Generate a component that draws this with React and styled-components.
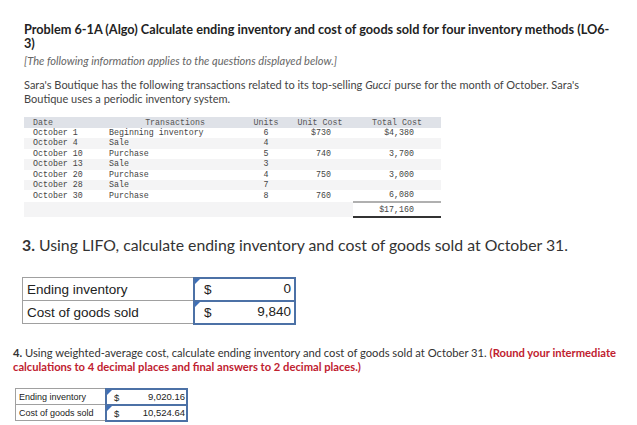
import React from 'react';
import styled, {createGlobalStyle} from 'styled-components';

const GlobalStyle = createGlobalStyle`
  body {
    margin: 0;
    background: #fff;
    font-family: Lato, "Liberation Sans", sans-serif;
    color: #333;
  }
`

const rows = [
  {date: 'October 1', what: 'Beginning inventory', units: '6', cost: '$730', total: '$4,380'},
  {date: 'October 4', what: 'Sale', units: '4', cost: '', total: ''},
  {date: 'October 10', what: 'Purchase', units: '5', cost: '740', total: '3,700'},
  {date: 'October 13', what: 'Sale', units: '3', cost: '', total: ''},
  {date: 'October 20', what: 'Purchase', units: '4', cost: '750', total: '3,000'},
  {date: 'October 28', what: 'Sale', units: '7', cost: '', total: ''},
  {date: 'October 30', what: 'Purchase', units: '8', cost: '760', total: '6,080'},
];

function App() {
  return (
    <Page>
      <GlobalStyle />
      <Title>Problem 6-1A (Algo) Calculate ending inventory and cost of goods sold for four inventory methods (LO6-3)</Title>
      <Note>[The following information applies to the questions displayed below.]</Note>
      <Para>
        Sara's Boutique has the following transactions related to its top-selling <Brand>Gucci</Brand> purse for the month of October. Sara's Boutique uses a periodic inventory system.
      </Para>

      <DataTable>
        <thead>
          <tr>
            <Head>Date</Head>
            <Head $center>Transactions</Head>
            <Head $center>Units</Head>
            <Head $center>Unit Cost</Head>
            <Head $center>Total Cost</Head>
          </tr>
        </thead>
        <tbody>
          {rows.map((r, i) => (
            <DataRow key={r.date} $shaded={i % 2 === 1}>
              <Cell>{r.date}</Cell>
              <Cell>{r.what}</Cell>
              <Cell $center>{r.units}</Cell>
              <Cell $right $pad={22}>{r.cost}</Cell>
              <Cell $right $pad={27}>{r.total}</Cell>
            </DataRow>
          ))}
          <TotalRow>
            <Cell />
            <Cell />
            <Cell />
            <Cell />
            <SumCell>$17,160</SumCell>
          </TotalRow>
        </tbody>
      </DataTable>

      <Heading><b>3.</b> Using LIFO, calculate ending inventory and cost of goods sold at October 31.</Heading>

      <AnswerTable>
        <tbody>
          <tr>
            <Label>Ending inventory</Label>
            <Input><Dollar>$</Dollar><Amount>0</Amount></Input>
          </tr>
          <tr>
            <Label>Cost of goods sold</Label>
            <Input><Dollar>$</Dollar><Amount>9,840</Amount></Input>
          </tr>
        </tbody>
      </AnswerTable>

      <Question>
        <b>4.</b> Using weighted-average cost, calculate ending inventory and cost of goods sold at October 31. <Hint>(Round your intermediate calculations to 4 decimal places and final answers to 2 decimal places.)</Hint>
      </Question>

      <AnswerTable $small>
        <tbody>
          <tr>
            <Label $small>Ending inventory</Label>
            <Input $small><Dollar $small>$</Dollar><Amount>9,020.16</Amount></Input>
          </tr>
          <tr>
            <Label $small>Cost of goods sold</Label>
            <Input $small><Dollar $small>$</Dollar><Amount>10,524.64</Amount></Input>
          </tr>
        </tbody>
      </AnswerTable>
    </Page>
  )
}

const Page = styled.div`
  width: 637px;
  height: 425px;
  box-sizing: border-box;
  padding: 23px 20px 0 24px;
  overflow: hidden;
`

const Title = styled.h1`
  margin: 0;
  font-size: 12.7px;
  line-height: 13.5px;
  font-weight: 700;
  color: #222;
`

const Note = styled.p`
  margin: 4px 0 0;
  font-size: 11.1px;
  line-height: 13px;
  font-style: italic;
  color: #666;
`

const Para = styled.p`
  margin: 11px 0 0;
  font-size: 11px;
  line-height: 14px;
  color: #444;
`

const Brand = styled.em`
  padding-right: 1px;
`

const DataTable = styled.table`
  margin-top: 11px;
  width: 417px;
  border-collapse: collapse;
  table-layout: fixed;
  font-family: "Liberation Mono", monospace;
  font-size: 8.3px;
  color: #444;
`

const Head = styled.th`
  height: 11px;
  padding: 0 0 0 ${p => (p.$center ? 0 : 9)}px;
  background: #dfe2e8;
  font-weight: 400;
  text-align: ${p => (p.$center ? 'center' : 'left')};
  color: #555;
  &:nth-child(1) { width: 72px; }
  &:nth-child(2) { width: 140px; }
  &:nth-child(3) { width: 42px; }
  &:nth-child(4) { width: 66px; }
  &:nth-child(5) { width: 88px; }
`

const DataRow = styled.tr`
  height: 10.4px;
  background: ${p => (p.$shaded ? '#f4f4f5' : '#fff')};
`

const Cell = styled.td`
  padding: 0 ${p => p.$pad || 0}px 0 ${p => (p.$center || p.$right ? 0 : 9)}px;
  line-height: 10.4px;
  white-space: nowrap;
  text-align: ${p => (p.$center ? 'center' : p.$right ? 'right' : 'left')};
  &:nth-child(2) { padding-left: 4px; }
`

const TotalRow = styled.tr`
  height: 15px;
  background: #f4f4f5;
`

const SumCell = styled.td`
  padding: 0 27px 0 0;
  text-align: right;
  background: #fff;
  border-top: 2px solid #b0b0b0;
  border-bottom: 2px solid #333;
`

const Heading = styled.h2`
  margin: 17px 0 0 -2px;
  font-size: 15.8px;
  line-height: 20px;
  font-weight: 400;
  color: #333;
`

const AnswerTable = styled.table`
  margin: ${p => (p.$small ? '14px 0 0 -9px' : '22px 0 0 -2px')};
  border-collapse: collapse;
  font-family: "Liberation Sans", Arial, sans-serif;
`

const Label = styled.td`
  width: ${p => (p.$small ? 86 : 166)}px;
  height: ${p => (p.$small ? 15 : 22)}px;
  padding: 0 0 0 ${p => (p.$small ? 3 : 4)}px;
  border: 1px solid #a0a0a0;
  font-size: ${p => (p.$small ? 9 : 13.5)}px;
  color: #222;
  white-space: nowrap;
`

const Input = styled.td`
  position: relative;
  width: ${p => (p.$small ? 78 : 96)}px;
  padding: 0 ${p => (p.$small ? 1 : 3)}px 0 0;
  border: 2px solid #4c71a6;
  font-size: ${p => (p.$small ? 9.5 : 13.5)}px;
  color: #222;
  &::before {
    content: '';
    position: absolute;
    left: 0;
    top: 0;
    border-left: 5px solid #3d6fb8;
    border-bottom: 5px solid transparent;
  }
  & > * { vertical-align: middle; }
`

const Dollar = styled.span`
  display: inline-block;
  width: ${p => (p.$small ? 12 : 14)}px;
  padding-left: ${p => (p.$small ? 7 : 9)}px;
`

const Amount = styled.span`
  float: right;
`

const Question = styled.p`
  margin: 21.5px -16px 0 -11px;
  font-size: 11.2px;
  line-height: 13.6px;
  color: #333;
`

const Hint = styled.b`
  color: #c0212f;
`

export default App
